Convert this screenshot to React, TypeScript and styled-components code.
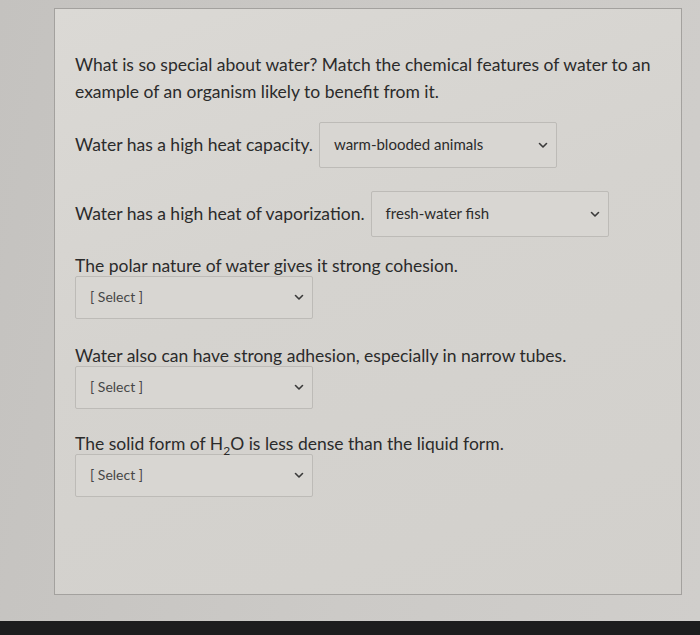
import styled, { createGlobalStyle } from "styled-components";

const GlobalStyle = createGlobalStyle`
	html, body {
		margin: 0;
		padding: 0;
		background: #c7c5c2;
	}
	body {
		font-family: Lato, "Open Sans", "Liberation Sans", sans-serif;
		color: #2b2b2b;
	}
`;

const Screen = styled.div`
	width: 700px;
	height: 635px;
	display: flex;
	flex-direction: column;
	overflow: hidden;
	background: linear-gradient(100deg, #c4c2bf 0%, #cccac7 55%, #d0cecb 100%);
`;

const Page = styled.div`
	flex: 1;
	padding: 8px 18px 0 54px;
`;

const Bezel = styled.div`
	height: 14px;
	background: #1d1d1e;
`;

const Card = styled.div`
	box-sizing: border-box;
	height: 587px;
	border: 1px solid #a3a19e;
	background: linear-gradient(160deg, #dbd9d5 0%, #d5d3cf 45%, #d2d0cc 100%);
	padding: 42px 20px 0 20px;
`;

const Prompt = styled.p`
	margin: 0;
	font-size: 17.5px;
	line-height: 27px;
	max-width: 595px;
`;

const InlineRow = styled.div<{ $top: number }>`
	display: flex;
	align-items: center;
	gap: 6px;
	margin-top: ${(p) => p.$top}px;
`;

const Group = styled.div<{ $top: number }>`
	margin-top: ${(p) => p.$top}px;
`;

const Label = styled.div<{ $tall?: boolean }>`
	font-size: 17.5px;
	line-height: ${(p) => (p.$tall ? "46px" : "20px")};
	white-space: nowrap;
`;

const SelectBox = styled.div<{ $tall?: boolean }>`
	box-sizing: border-box;
	width: 238px;
	height: ${(p) => (p.$tall ? "46px" : "43px")};
	display: flex;
	align-items: center;
	justify-content: space-between;
	padding: 0 8px 0 14px;
	border: 1px solid #bdbbb7;
	border-radius: 2px;
	background: #d8d6d2;
`;

const SelectText = styled.span<{ $muted?: boolean }>`
	font-size: ${(p) => (p.$muted ? "14px" : "15px")};
	color: ${(p) => (p.$muted ? "#474747" : "#2b2b2b")};
	margin-top: ${(p) => (p.$muted ? "-3px" : "-2px")};
`;

const Sub = styled.sub`
	font-size: 12px;
	line-height: 0;
`;

function Chevron() {
	return (
		<svg width="10" height="7" viewBox="0 0 10 7">
			<path d="M1.5 1.5 L5 5 L8.5 1.5" fill="none" stroke="#3a3a3a" strokeWidth="1.6" strokeLinecap="round" strokeLinejoin="round" />
		</svg>
	);
}

function Dropdown({ value, tall }: { value?: string; tall?: boolean }) {
	return (
		<SelectBox $tall={tall}>
			<SelectText $muted={!value}>{value ?? "[ Select ]"}</SelectText>
			<Chevron />
		</SelectBox>
	);
}

export default function App() {
	return (
		<>
			<GlobalStyle />
			<Screen>
				<Page>
					<Card>
						<Prompt>
							What is so special about water? Match the chemical features of water to an example of an organism likely to benefit from it.
						</Prompt>

						<InlineRow $top={17}>
							<Label $tall>Water has a high heat capacity.</Label>
							<Dropdown value="warm-blooded animals" tall />
						</InlineRow>

						<InlineRow $top={23}>
							<Label $tall>Water has a high heat of vaporization.</Label>
							<Dropdown value="fresh-water fish" tall />
						</InlineRow>

						<Group $top={19}>
							<Label>The polar nature of water gives it strong cohesion.</Label>
							<Dropdown />
						</Group>

						<Group $top={27}>
							<Label>Water also can have strong adhesion, especially in narrow tubes.</Label>
							<Dropdown />
						</Group>

						<Group $top={25}>
							<Label>
								The solid form of H<Sub>2</Sub>O is less dense than the liquid form.
							</Label>
							<Dropdown />
						</Group>
					</Card>
				</Page>
				<Bezel />
			</Screen>
		</>
	);
}
